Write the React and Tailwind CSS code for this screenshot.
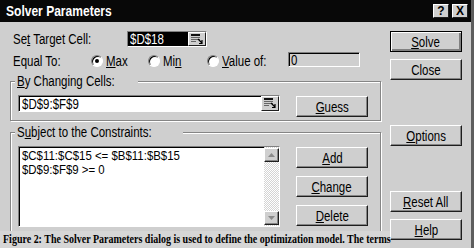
import React from "react";

// the dialog in the picture is squeezed horizontally, so text is narrowed
function N({ children, className = "" }) {
  return <span className={`inline-block origin-left scale-x-[0.82] whitespace-nowrap ${className}`}>{children}</span>;
}

function Btn({ children, def, className = "" }) {
  return (
    <div
      className={`flex h-[21px] w-[72px] items-center justify-center bg-[#cfcfcf] text-[14px] leading-none text-black ${
        def
          ? "border border-black shadow-[inset_1px_1px_0_#ffffff,inset_-2px_-2px_0_#808080]"
          : "border border-t-white border-l-white border-r-[#1e1e1e] border-b-[#1e1e1e] shadow-[inset_-1px_-1px_0_#858585]"
      } ${className}`}
    >
      <span className="inline-block origin-center scale-x-[0.82] whitespace-nowrap">{children}</span>
    </div>
  );
}

function Radio({ checked }) {
  return (
    <span className="flex h-[12px] w-[12px] shrink-0 items-center justify-center rounded-full border border-t-[#808080] border-l-[#808080] border-r-white border-b-white bg-white shadow-[inset_1px_1px_0_#000]">
      {checked && <span className="h-[4px] w-[4px] rounded-full bg-black" />}
    </span>
  );
}

function RefIcon() {
  return (
    <svg width="13" height="11" viewBox="0 0 13 11">
      <rect x="0" y="0" width="9" height="2" fill="#111" />
      <rect x="0" y="3" width="9" height="1" fill="#666" />
      <rect x="0" y="5" width="9" height="1" fill="#666" />
      <rect x="0" y="7" width="5" height="1" fill="#666" />
      <path d="M7 5 L11 9 M11 6 V9.5 H8" stroke="#000" strokeWidth="1.2" fill="none" />
    </svg>
  );
}

function RefBtn() {
  return (
    <div className="flex h-full w-[18px] items-center justify-center border border-t-white border-l-white border-r-[#1e1e1e] border-b-[#1e1e1e] bg-[#cfcfcf]">
      <RefIcon />
    </div>
  );
}

function ScrollArrow({ down }) {
  return (
    <div className="flex h-[14px] w-[15px] items-center justify-center border border-t-white border-l-white border-r-[#1e1e1e] border-b-[#1e1e1e] bg-[#cfcfcf] shadow-[inset_-1px_-1px_0_#858585]">
      <svg width="7" height="4" viewBox="0 0 7 4">
        {down ? <path d="M0 0 H7 L3.5 4 Z" fill="#8a8a8a" /> : <path d="M0 4 H7 L3.5 0 Z" fill="#8a8a8a" />}
      </svg>
    </div>
  );
}

export default function App() {
  return (
    <div className="relative h-[248px] w-[474px] overflow-hidden border-r-[3px] border-[#5e5e5e] bg-[#cfcfcf] font-['Liberation_Sans',Arial,sans-serif] text-[14px] leading-none text-black">
      {/* title bar */}
      <div className="flex h-[22px] items-center justify-between bg-[#080808] pl-[6px] pr-[3px]">
        <span className="inline-block origin-left scale-x-[0.83] whitespace-nowrap text-[14.5px] font-bold text-white">Solver Parameters</span>
        <div className="flex gap-[3px]">
          <div className="flex h-[14px] w-[16px] items-center justify-center border border-t-white border-l-white border-r-[#1e1e1e] border-b-[#1e1e1e] bg-[#cfcfcf] text-[12px] font-bold">?</div>
          <div className="flex h-[14px] w-[16px] items-center justify-center border border-t-white border-l-white border-r-[#1e1e1e] border-b-[#1e1e1e] bg-[#cfcfcf] text-[12px] font-bold">X</div>
        </div>
      </div>

      <div className="flex">
        {/* left column */}
        <div className="ml-[10px] w-[371px]">
          <div className="mt-[9px] flex h-[16px] items-center">
            <span className="w-[117px] pl-[3px]"><N>Se<u>t</u> Target Cell:</N></span>
            <div className="flex h-[16px] w-[80px] border border-t-[#808080] border-l-[#808080] border-r-white border-b-white">
              <div className="flex flex-1 items-center bg-black pl-[2px] text-white"><N>$D$18</N></div>
              <RefBtn />
            </div>
          </div>

          <div className="mt-[6px] flex h-[16px] items-center">
            <span className="w-[81px] pl-[3px]"><N>Equal To:</N></span>
            <div className="flex w-[57px] items-center gap-[3px]">
              <Radio checked />
              <N><u>M</u>ax</N>
            </div>
            <div className="flex w-[59px] items-center gap-[3px]">
              <Radio />
              <N>Mi<u>n</u></N>
            </div>
            <div className="flex w-[81px] items-center gap-[3px]">
              <Radio />
              <N><u>V</u>alue of:</N>
            </div>
            <div className="-mt-[3px] flex h-[15px] w-[72px] items-center border border-t-[#808080] border-l-[#808080] border-r-white border-b-white pl-[2px] shadow-[inset_1px_1px_0_#000]">
              <N>0</N>
            </div>
          </div>

          {/* By Changing Cells */}
          <div className="mt-[12px] border border-[#858585] pb-[3px] shadow-[inset_1px_1px_0_#fff,1px_1px_0_#fff]">
            <div className="-mt-[7px] ml-[4px] w-fit bg-[#cfcfcf] px-[2px] leading-[13px]">
              <N><u>B</u>y Changing Cells:</N>
            </div>
            <div className="mt-[7px] flex items-start pl-[7px]">
              <div className="flex h-[17px] w-[262px] border border-t-[#808080] border-l-[#808080] border-r-white border-b-white bg-white shadow-[inset_1px_1px_0_#000]">
                <div className="flex flex-1 items-center pl-[3px]"><N>$D$9:$F$9</N></div>
                <RefBtn />
              </div>
              <Btn className="ml-[16px] mt-[1px]"><u>G</u>uess</Btn>
            </div>
          </div>

          {/* Subject to the Constraints */}
          <div className="mt-[11px] h-[110px] border border-[#858585] shadow-[inset_1px_1px_0_#fff,1px_1px_0_#fff]">
            <div className="-mt-[7px] ml-[4px] w-fit bg-[#cfcfcf] px-[2px] leading-[13px]">
              <N>S<u>u</u>bject to the Constraints:</N>
            </div>
            <div className="mt-[7px] flex items-start pl-[7px]">
              <div className="flex h-[81px] w-[262px] border border-t-[#808080] border-l-[#808080] border-r-white border-b-white bg-white shadow-[inset_1px_1px_0_#000]">
                <div className="flex flex-1 flex-col pl-[3px] pt-[2px] text-[13px] leading-[14px]">
                  <span className="inline-block origin-left scale-x-[0.88] whitespace-nowrap leading-[14px]">$C$11:$C$15 &lt;= $B$11:$B$15</span>
                  <span className="inline-block origin-left scale-x-[0.88] whitespace-nowrap leading-[14px]">$D$9:$F$9 &gt;= 0</span>
                </div>
                <div className="flex w-[15px] flex-col justify-between bg-[repeating-conic-gradient(#ffffff_0_25%,#d4d4d4_0_50%)] bg-[length:2px_2px] pt-[1px] pb-[1px]">
                  <ScrollArrow />
                  <ScrollArrow down />
                </div>
              </div>
              <div className="ml-[16px] mt-[1px] flex flex-col gap-[8px]">
                <Btn><u>A</u>dd</Btn>
                <Btn><u>C</u>hange</Btn>
                <Btn><u>D</u>elete</Btn>
              </div>
            </div>
          </div>
        </div>

        {/* right column */}
        <div className="ml-[9px] flex w-[73px] flex-col">
          <Btn def className="mt-[9px]"><u>S</u>olve</Btn>
          <Btn className="mt-[7px]">Close</Btn>
          <Btn className="mt-[45px]"><u>O</u>ptions</Btn>
          <Btn className="mt-[45px]"><u>R</u>eset All</Btn>
          <Btn className="mt-[7px]"><u>H</u>elp</Btn>
        </div>
      </div>

      {/* figure caption pasted over the bottom of the dialog */}
      <div className="absolute left-0 top-[231px] h-[17px] w-[390px] bg-[#d6d6d6]">
        <div className="mt-[2px] ml-[3px] origin-left scale-x-[0.82] whitespace-nowrap font-['Liberation_Serif',serif] text-[12.2px] font-bold leading-[13px] text-black">
          Figure 2: The Solver Parameters dialog is used to define the optimization model. The terms
        </div>
      </div>
    </div>
  );
}
